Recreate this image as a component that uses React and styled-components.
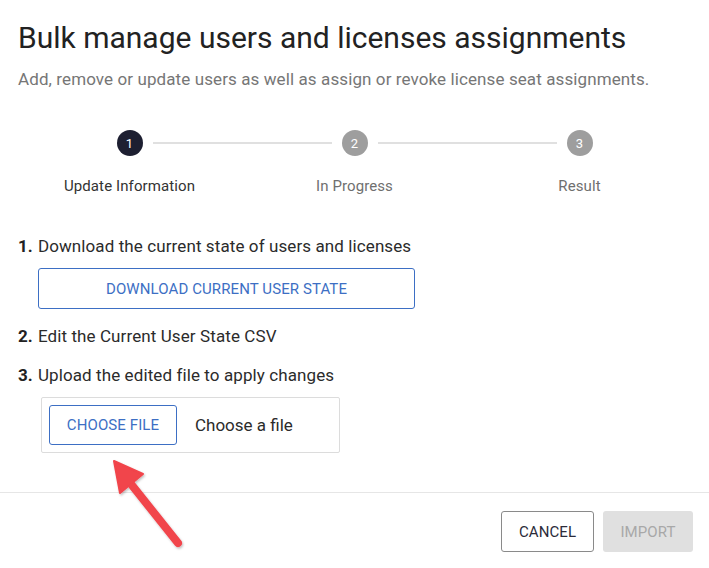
import styled, { createGlobalStyle } from "styled-components";

const GlobalStyle = createGlobalStyle`
  html, body {
    margin: 0;
    padding: 0;
    background: #fff;
  }
  body {
    font-family: Roboto, "Liberation Sans", sans-serif;
    color: #222;
  }
`;

const Dialog = styled.div`
  position: relative;
  width: 709px;
  height: 568px;
  display: flex;
  flex-direction: column;
  overflow: hidden;
`;

const Header = styled.div`
  padding: 20px 18px 0;
`;

const Title = styled.h1`
  margin: 0;
  font-size: 30px;
  line-height: 36px;
  font-weight: 400;
  color: #222;
`;

const Subtitle = styled.p`
  margin: 12px 0 0;
  font-size: 17px;
  line-height: 22px;
  letter-spacing: 0.1px;
  color: #767676;
`;

const Stepper = styled.div`
  display: grid;
  grid-template-columns: repeat(3, 225px);
  padding: 0 17px;
  margin-top: 40px;
`;

const Step = styled.div`
  display: flex;
  flex-direction: column;
  align-items: center;
`;

const StepHead = styled.div`
  display: flex;
  align-items: center;
  width: 100%;
`;

const Connector = styled.span`
  flex: 1;
  height: 2px;
  background: ${(p) => (p.$hidden ? "transparent" : "#e0e0e0")};
  margin: ${(p) => (p.$side === "left" ? "0 10px 0 0" : "0 0 0 10px")};
`;

const Circle = styled.span`
  width: 26px;
  height: 26px;
  border-radius: 50%;
  background: ${(p) => (p.$active ? "#1d1f31" : "#9e9e9e")};
  color: #fff;
  font-size: 13px;
  display: flex;
  align-items: center;
  justify-content: center;
  flex-shrink: 0;
`;

const StepLabel = styled.span`
  margin-top: 20px;
  font-size: 15px;
  line-height: 20px;
  letter-spacing: 0.1px;
  color: ${(p) => (p.$active ? "#333" : "#6f6f6f")};
`;

const Steps = styled.ol`
  list-style: none;
  margin: 38px 0 0;
  padding: 0 18px;
`;

const Item = styled.li`
  display: flex;
  flex-direction: column;
  align-items: flex-start;
  & + & {
    margin-top: ${(p) => p.$gap || 16}px;
  }
`;

const ItemLine = styled.div`
  display: flex;
  align-items: baseline;
  gap: 5px;
  font-size: 17px;
  line-height: 24px;
  letter-spacing: 0.1px;
  color: #2b2b2b;
`;

const Num = styled.b`
  font-weight: 700;
  color: #222;
`;

const OutlineButton = styled.button`
  font-family: inherit;
  height: ${(p) => p.$height || 41}px;
  width: ${(p) => p.$width}px;
  border: 1px solid ${(p) => p.$border || "#3d6fc4"};
  border-radius: 3px;
  background: #fff;
  color: ${(p) => p.$color || "#3d6fc4"};
  font-size: 15px;
  text-transform: uppercase;
  letter-spacing: 0.1px;
  padding: 0;
  cursor: pointer;
`;

const DownloadButton = styled(OutlineButton)`
  margin: 10px 0 0 20px;
`;

const FileBox = styled.div`
  display: flex;
  align-items: center;
  gap: 18px;
  margin: 10px 0 0 23px;
  width: 283px;
  height: 40px;
  padding: 7px 7px;
  border: 1px solid #dcdcdc;
  border-radius: 2px;
`;

const FileName = styled.span`
  font-size: 17px;
  color: #2b2b2b;
`;

const Footer = styled.div`
  margin-top: auto;
  border-top: 1px solid #e6e6e6;
  padding: 18px 16px 16px;
  display: flex;
  justify-content: flex-end;
  gap: 9px;
`;

const FilledButton = styled.button`
  font-family: inherit;
  height: 41px;
  width: ${(p) => p.$width}px;
  border: none;
  border-radius: 3px;
  background: #e0e0e0;
  color: #a8a8a8;
  font-size: 15px;
  text-transform: uppercase;
  letter-spacing: 0.1px;
  padding: 0;
`;

const Annotation = styled.svg`
  position: absolute;
  left: 100px;
  top: 450px;
  pointer-events: none;
`;

const steps = [
  { n: 1, label: "Update Information", active: true },
  { n: 2, label: "In Progress" },
  { n: 3, label: "Result" },
];

export default function App() {
  return (
    <Dialog>
      <GlobalStyle />
      <Header>
        <Title>Bulk manage users and licenses assignments</Title>
        <Subtitle>
          Add, remove or update users as well as assign or revoke license seat assignments.
        </Subtitle>
      </Header>

      <Stepper>
        {steps.map((s, i) => (
          <Step key={s.n}>
            <StepHead>
              <Connector $side="left" $hidden={i === 0} />
              <Circle $active={s.active}>{s.n}</Circle>
              <Connector $side="right" $hidden={i === steps.length - 1} />
            </StepHead>
            <StepLabel $active={s.active}>{s.label}</StepLabel>
          </Step>
        ))}
      </Stepper>

      <Steps>
        <Item>
          <ItemLine>
            <Num>1.</Num> Download the current state of users and licenses
          </ItemLine>
          <DownloadButton $width={377}>Download current user state</DownloadButton>
        </Item>
        <Item $gap={18}>
          <ItemLine>
            <Num>2.</Num> Edit the Current User State CSV
          </ItemLine>
        </Item>
        <Item $gap={15}>
          <ItemLine>
            <Num>3.</Num> Upload the edited file to apply changes
          </ItemLine>
          <FileBox>
            <OutlineButton $width={128} $height={40}>Choose file</OutlineButton>
            <FileName>Choose a file</FileName>
          </FileBox>
        </Item>
      </Steps>

      <Footer>
        <OutlineButton $width={93} $border="#8a8a8a" $color="#2c2c3a">Cancel</OutlineButton>
        <FilledButton $width={90}>Import</FilledButton>
      </Footer>

      <Annotation width="100" height="110" viewBox="100 450 100 110">
        <defs>
          <filter id="shadow" x="-20%" y="-20%" width="140%" height="140%">
            <feDropShadow dx="1" dy="1.5" stdDeviation="1.2" floodColor="#000" floodOpacity="0.25" />
          </filter>
        </defs>
        <g filter="url(#shadow)">
          <line x1="127" y1="479" x2="178" y2="543" stroke="#f1444b" strokeWidth="8" strokeLinecap="round" />
          <polygon points="114,461 120,493 143,474" fill="#f1444b" stroke="#f1444b" strokeWidth="2" strokeLinejoin="round" />
        </g>
      </Annotation>
    </Dialog>
  );
}
